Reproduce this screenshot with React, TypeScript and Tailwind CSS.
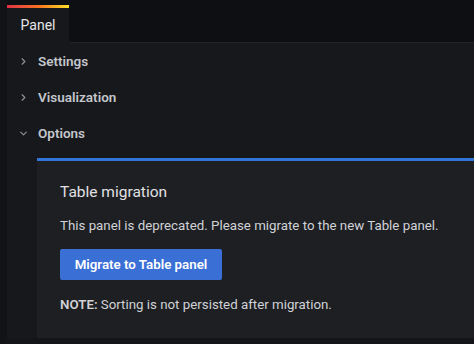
import { ChevronRight, ChevronDown } from "lucide-react";

const sections = [
  { label: "Settings", open: false },
  { label: "Visualization", open: false },
  { label: "Options", open: true },
];

export default function App() {
  return (
    <div
      className="flex h-[344px] w-[474px] overflow-hidden bg-[#141518] text-[#c7d0d9]"
      style={{ fontFamily: "Roboto, 'Liberation Sans', sans-serif" }}
    >
      <div className="w-[7px] shrink-0 bg-[#121316]" />
      <div className="flex min-w-0 flex-1 flex-col">
        {/* tab bar */}
        <div className="flex h-[43px] shrink-0 items-end bg-[#0e0f12]">
          <div className="flex h-[38px] w-[62px] flex-col bg-[#17181b]">
            <div className="h-[3px] w-full bg-gradient-to-r from-[#e02f44] via-[#f56f1e] to-[#fade2a]" />
            <div className="flex flex-1 items-center justify-center pb-[1px] text-[14px] text-[#e4e5e7]">
              Panel
            </div>
          </div>
          <div className="h-px flex-1 bg-[#202226]" />
        </div>

        {/* body */}
        <div className="flex flex-1 flex-col bg-[#17181b]">
          {sections.map(({ label, open }) => (
            <div key={label} className="flex h-[36px] items-center">
              <div className="flex w-[31px] justify-center pl-[1px] text-[#8e9198]">
                {open ? (
                  <ChevronDown size={11} strokeWidth={2.5} />
                ) : (
                  <ChevronRight size={11} strokeWidth={2.5} />
                )}
              </div>
              <span className="text-[13.5px] font-semibold text-[#c3c6cc]">
                {label}
              </span>
            </div>
          ))}

          <div className="ml-[30px] mt-[7px] flex h-[180px] flex-col border-t-[3px] border-[#3274d9] bg-[#1e1f23] pl-[23px] pt-[20px]">
            <div className="text-[15.5px] text-[#e0e1e3]">Table migration</div>
            <p className="mt-[12px] text-[13.3px] text-[#d0d2d6]">
              This panel is deprecated. Please migrate to the new Table panel.
            </p>
            <button className="mt-[13px] h-[31px] w-[162px] rounded-[2px] bg-[#3a6fd6] text-[13.3px] font-semibold text-white">
              Migrate to Table panel
            </button>
            <p className="mt-[15px] text-[13.3px] text-[#d0d2d6]">
              <span className="font-semibold">NOTE:</span> Sorting is not
              persisted after migration.
            </p>
          </div>
          <div className="flex-1 bg-[#141518]" />
        </div>
      </div>
    </div>
  );
}
